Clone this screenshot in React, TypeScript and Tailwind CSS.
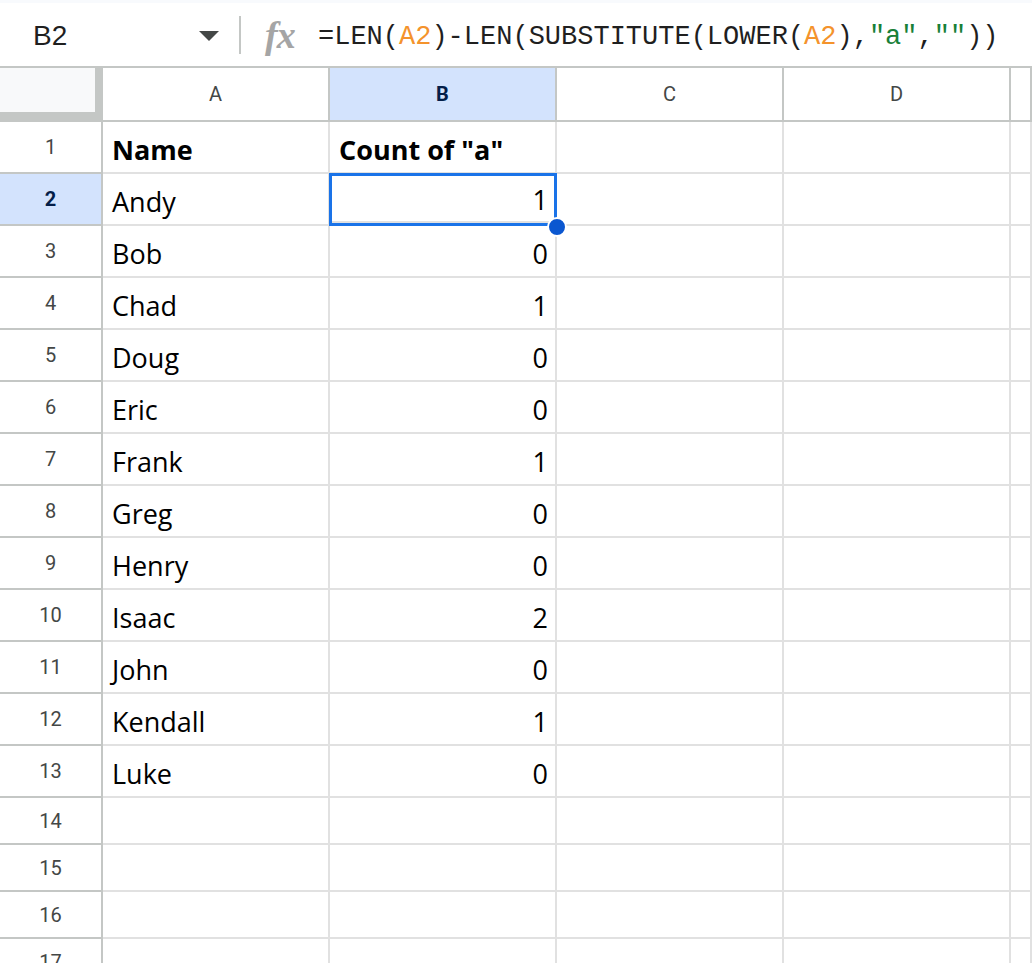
import React from 'react';

const rows: { name: string; count: number }[] = [
  { name: 'Andy', count: 1 },
  { name: 'Bob', count: 0 },
  { name: 'Chad', count: 1 },
  { name: 'Doug', count: 0 },
  { name: 'Eric', count: 0 },
  { name: 'Frank', count: 1 },
  { name: 'Greg', count: 0 },
  { name: 'Henry', count: 0 },
  { name: 'Isaac', count: 2 },
  { name: 'John', count: 0 },
  { name: 'Kendall', count: 1 },
  { name: 'Luke', count: 0 },
];

const gridCols = 'grid grid-cols-[103px_227px_227px_227px_227px_1fr]';
const cellFont = { fontFamily: '"Open Sans", "Liberation Sans", sans-serif' };
const uiFont = { fontFamily: 'Roboto, "Liberation Sans", Arial, sans-serif' };

const RowHeader = ({ n, active }: { n: number; active?: boolean }) => (
  <div
    className={`flex items-center justify-center border-r-2 border-b-2 border-[#c4c7c5] text-[20px] ${
      active ? 'bg-[#d3e3fd] font-bold text-[#041e49]' : 'bg-white text-[#444746]'
    }`}
    style={uiFont}
  >
    {n}
  </div>
);

const Cell = ({ children, right, bold }: { children?: React.ReactNode; right?: boolean; bold?: boolean }) => (
  <div
    className={`flex items-center pt-[6px] border-r-2 border-b-2 border-[#e1e1e1] text-[27px] text-black ${
      right ? 'justify-end pr-[7px]' : 'pl-[9px]'
    } ${bold ? 'font-bold' : ''}`}
    style={cellFont}
  >
    {children}
  </div>
);

export default function App() {
  return (
    <div className="w-[1032px] h-[963px] overflow-hidden bg-white">
      <div className="h-[3px] bg-[#f8fafd]" />

      {/* formula bar */}
      <div className="h-[65px] flex items-center border-b-2 border-[#c4c7c5]">
        <div className="w-[239px] flex items-center pl-[33px] pr-[20px] pt-[2px]">
          <span className="text-[28px] text-[#1f1f1f]" style={{ fontFamily: '"Liberation Sans", Arial, sans-serif' }}>
            B2
          </span>
          <svg className="ml-auto" width="20" height="10" viewBox="0 0 20 10">
            <path d="M0 0 L20 0 L10 10 Z" fill="#444746" />
          </svg>
        </div>
        <div className="w-[2px] h-[38px] bg-[#c4c7c5]" />
        <span
          className="ml-[24px] w-[36px] text-[38px] italic font-bold text-[#a5a5a5] leading-none tracking-[-1px]"
          style={{ fontFamily: '"Liberation Serif", "DejaVu Serif", serif' }}
        >
          fx
        </span>
        <div
          className="ml-[17px] pt-[5px] text-[27px] text-[#1f1f1f] whitespace-pre"
          style={{ fontFamily: '"Liberation Mono", "DejaVu Sans Mono", monospace' }}
        >
          =LEN(<span className="text-[#f4932c]">A2</span>)-LEN(SUBSTITUTE(LOWER(
          <span className="text-[#f4932c]">A2</span>),<span className="text-[#188038]">"a"</span>,
          <span className="text-[#188038]">""</span>))
        </div>
      </div>

      {/* column headers */}
      <div className={`${gridCols} h-[54px]`}>
        <div className="bg-[#f8f9fa] border-r-[8px] border-b-[10px] border-[#c4c7c5]" />
        {['A', 'B', 'C', 'D', ''].map((c) => (
          <div
            key={c || 'E'}
            className={`flex items-center justify-center border-r-2 border-b-2 border-[#c4c7c5] text-[20px] ${
              c === 'B' ? 'bg-[#d3e3fd] font-bold text-[#041e49]' : 'bg-white text-[#444746]'
            }`}
            style={uiFont}
          >
            {c}
          </div>
        ))}
      </div>

      {/* row 1 */}
      <div className={`${gridCols} h-[52px]`}>
        <RowHeader n={1} />
        <Cell bold>Name</Cell>
        <Cell bold>Count of "a"</Cell>
        <Cell />
        <Cell />
        <Cell />
      </div>

      {rows.map((r, i) => (
        <div key={r.name} className={`${gridCols} h-[52px]`}>
          <RowHeader n={i + 2} active={i === 0} />
          <Cell>{r.name}</Cell>
          {i === 0 ? (
            <div className="relative">
              <Cell right>{r.count}</Cell>
              <div className="absolute -left-[1px] -top-[1px] w-[228px] h-[53px] border-[3px] border-[#1a73e8] pointer-events-none" />
              <div className="absolute left-[217px] top-[43px] w-[20px] h-[20px] rounded-full bg-[#0b57d0] border-2 border-white" />
            </div>
          ) : (
            <Cell right>{r.count}</Cell>
          )}
          <Cell />
          <Cell />
          <Cell />
        </div>
      ))}

      {[14, 15, 16, 17].map((n) => (
        <div key={n} className={`${gridCols} h-[47px]`}>
          <RowHeader n={n} />
          <Cell />
          <Cell />
          <Cell />
          <Cell />
          <Cell />
        </div>
      ))}
    </div>
  );
}
